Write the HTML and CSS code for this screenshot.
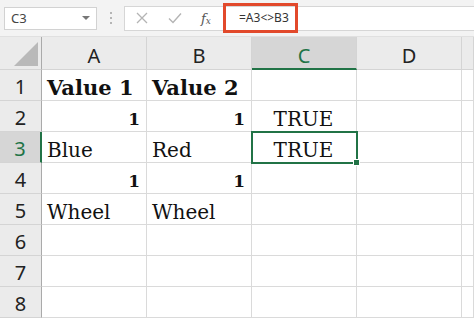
FILE: index.html
```html
<!DOCTYPE html>
<html lang="en">
<head>
  <meta charset="UTF-8" />
  <title>Sheet</title>
  <link rel="stylesheet" href="styles.css">
</head>
<body>

  <div class="toolbar">
    <div class="namebox">
      <span>C3</span>
      <span class="caret"></span>
    </div>
    <div class="dots"><i></i><i></i><i></i></div>
    <div class="formula">
      <div class="tools">
        <svg width="14" height="14" viewBox="0 0 14 14"><path d="M2 2 L12 12 M12 2 L2 12" stroke="#b4b4b4" stroke-width="1.3" fill="none"/></svg>
        <svg width="16" height="14" viewBox="0 0 16 14"><path d="M2 7.5 L6 11.5 L14 2.5" stroke="#b4b4b4" stroke-width="1.4" fill="none"/></svg>
        <span class="fx">f<sub>x</sub></span>
      </div>
      <div class="entry">=A3&lt;&gt;B3</div>
    </div>
  </div>

  <div class="sheet">
    <div class="hd corner">
      <svg width="26" height="26" viewBox="0 0 26 26"><polygon points="25,1 25,25 1,25" fill="#b9b9b9"/></svg>
    </div>
    <div class="hd col">A</div>
    <div class="hd col">B</div>
    <div class="hd col active">C</div>
    <div class="hd col">D</div>
    <div class="hd col"></div>

    <div class="hd row">1</div>
    <div class="cell bold">Value 1</div>
    <div class="cell bold">Value 2</div>
    <div class="cell"></div>
    <div class="cell"></div>
    <div class="cell"></div>

    <div class="hd row">2</div>
    <div class="cell num">1</div>
    <div class="cell num">1</div>
    <div class="cell center">TRUE</div>
    <div class="cell"></div>
    <div class="cell"></div>

    <div class="hd row active">3</div>
    <div class="cell">Blue</div>
    <div class="cell">Red</div>
    <div class="cell center selected">TRUE</div>
    <div class="cell"></div>
    <div class="cell"></div>

    <div class="hd row">4</div>
    <div class="cell num">1</div>
    <div class="cell num">1</div>
    <div class="cell"></div>
    <div class="cell"></div>
    <div class="cell"></div>

    <div class="hd row">5</div>
    <div class="cell">Wheel</div>
    <div class="cell">Wheel</div>
    <div class="cell"></div>
    <div class="cell"></div>
    <div class="cell"></div>

    <div class="hd row">6</div>
    <div class="cell"></div>
    <div class="cell"></div>
    <div class="cell"></div>
    <div class="cell"></div>
    <div class="cell"></div>

    <div class="hd row">7</div>
    <div class="cell"></div>
    <div class="cell"></div>
    <div class="cell"></div>
    <div class="cell"></div>
    <div class="cell"></div>

    <div class="hd row">8</div>
    <div class="cell"></div>
    <div class="cell"></div>
    <div class="cell"></div>
    <div class="cell"></div>
    <div class="cell"></div>
  </div>

</body>
</html>
```

FILE: styles.css
```css
body {
  margin: 0;
  background: white;
  font-family: "Noto Sans", Arial, sans-serif;
  overflow: hidden;
}
.toolbar {
  display: flex;
  align-items: center;
  height: 37px;
  background: #f3f3f3;
  border-bottom: 1px solid #e0e0e0;
  box-sizing: border-box;
}
.namebox {
  display: flex;
  align-items: center;
  justify-content: space-between;
  margin-left: 4px;
  width: 93px;
  height: 23px;
  padding: 0 6px 0 6px;
  box-sizing: border-box;
  background: white;
  border: 1px solid #d2d2d2;
  font-size: 13px;
  color: #444;
}
.caret {
  width: 0;
  height: 0;
  border-left: 4px solid transparent;
  border-right: 4px solid transparent;
  border-top: 4px solid #777;
}
.dots {
  display: flex;
  flex-direction: column;
  gap: 3px;
  margin: 0 12px 0 13px;
}
.dots i {
  width: 2px;
  height: 2px;
  background: #b5b5b5;
}
.formula {
  flex: 1;
  display: flex;
  align-items: center;
  height: 23px;
  background: white;
  border: 1px solid #d6d6d6;
  border-right: none;
}
.tools {
  display: flex;
  align-items: center;
  gap: 18px;
  padding-left: 10px;
  width: 88px;
}
.fx {
  font-family: "DejaVu Serif", serif;
  font-style: italic;
  font-size: 13px;
  color: #555;
}
.fx sub {
  font-size: 9px;
  vertical-align: -1px;
}
.entry {
  height: 24px;
  margin: -4px 0;
  width: 56px;
  border: 3px solid #e2492b;
  box-sizing: content-box;
  padding-left: 13px;
  font-size: 12px;
  line-height: 24px;
  color: #333;
}
.sheet {
  display: grid;
  grid-template-columns: 42px 105px 105px 105px 105px 1fr;
  grid-template-rows: 33px repeat(8, 31px);
}
.hd {
  background: #ebebeb;
  border-right: 1px solid #d4d4d4;
  border-bottom: 1px solid #d4d4d4;
  box-sizing: border-box;
  color: #222;
  font-size: 20px;
  text-align: center;
}
.corner {
  display: flex;
  align-items: flex-end;
  justify-content: flex-end;
  padding: 0 2px 2px 0;
  border-right: 1px solid #aaa;
}
.col {
  line-height: 37px;
}
.col.active {
  background: #d6d6d6;
  color: #217346;
  border-bottom: 2px solid #217346;
}
.row {
  line-height: 33px;
  border-right: 1px solid #aaa;
}
.row.active {
  background: #d6d6d6;
  color: #217346;
  border-right: 2px solid #217346;
}
.cell {
  border-right: 1px solid #dadada;
  border-bottom: 1px solid #dadada;
  box-sizing: border-box;
  padding: 5px 6px 0 5px;
  font-family: "DejaVu Serif", Georgia, serif;
  font-size: 20px;
  line-height: 26px;
  color: #111;
  white-space: nowrap;
}
.bold {
  font-weight: bold;
  font-size: 21px;
}
.num {
  text-align: right;
  font-weight: bold;
  font-size: 17px;
}
.center {
  text-align: center;
}
.selected {
  position: relative;
  outline: 2px solid #217346;
  outline-offset: -1px;
}
.selected::after {
  content: "";
  position: absolute;
  right: -4px;
  bottom: -4px;
  width: 5px;
  height: 5px;
  background: #217346;
  border: 1px solid white;
}
```
